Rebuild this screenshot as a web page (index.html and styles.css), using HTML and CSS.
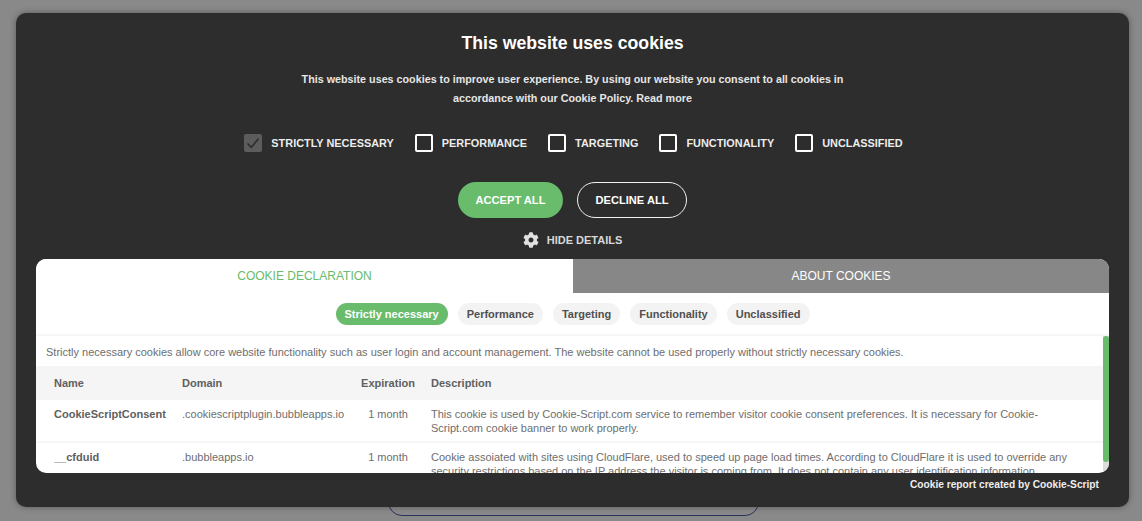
FILE: index.html
```html
<!DOCTYPE html>
<html lang="en">
<head>
<meta charset="utf-8">
<title>Cookies</title>
<link rel="stylesheet" href="styles.css">
</head>
<body>
<div class="behind"></div>
<section class="modal">
  <h1 class="title">This website uses cookies</h1>
  <p class="intro">This website uses cookies to improve user experience. By using our website you consent to all cookies in<br>accordance with our Cookie Policy. <span>Read more</span></p>
  <div class="checks">
    <label class="check"><span class="box box-on"><svg viewBox="0 0 18 18" width="18" height="18"><path d="M3.500 9.500l3.800 3.800 7.200-8.600" fill="none" stroke="#2d2d2d" stroke-width="1.600"/></svg></span>STRICTLY NECESSARY</label>
    <label class="check"><span class="box"></span>PERFORMANCE</label>
    <label class="check"><span class="box"></span>TARGETING</label>
    <label class="check"><span class="box"></span>FUNCTIONALITY</label>
    <label class="check"><span class="box"></span>UNCLASSIFIED</label>
  </div>
  <div class="actions">
    <button class="btn btn-accept">ACCEPT ALL</button>
    <button class="btn btn-decline">DECLINE ALL</button>
  </div>
  <div class="details">
    <svg class="gear" viewBox="0 0 512 512" width="16" height="16"><path fill="#e0e0e0" d="M487.400 315.700l-42.600-24.600c4.300-23.200 4.300-47 0-70.200l42.600-24.600c4.900-2.800 7.100-8.600 5.500-14-11.100-35.600-30-67.800-54.700-94.600-3.800-4.100-10-5.100-14.800-2.300L380.800 110c-17.900-15.400-38.500-27.300-60.800-35.100V25.800c0-5.600-3.900-10.500-9.400-11.700-36.700-8.200-74.300-7.800-109.200 0-5.500 1.200-9.400 6.100-9.400 11.700V75c-22.200 7.900-42.800 19.800-60.800 35.100L88.700 85.500c-4.900-2.800-11-1.900-14.800 2.300-24.700 26.700-43.600 58.900-54.700 94.600-1.700 5.400.6 11.200 5.500 14L67.300 221c-4.300 23.200-4.300 47 0 70.200l-42.600 24.600c-4.900 2.800-7.100 8.600-5.500 14 11.100 35.600 30 67.800 54.700 94.600 3.800 4.100 10 5.100 14.800 2.300l42.600-24.600c17.900 15.400 38.500 27.300 60.800 35.100v49.200c0 5.600 3.900 10.500 9.400 11.700 36.700 8.200 74.300 7.800 109.200 0 5.500-1.200 9.400-6.100 9.400-11.700v-49.200c22.200-7.900 42.800-19.800 60.800-35.100l42.600 24.600c4.900 2.800 11 1.900 14.800-2.300 24.700-26.700 43.600-58.900 54.700-94.600 1.500-5.500-.7-11.300-5.600-14.100zM256 336c-44.100 0-80-35.900-80-80s35.900-80 80-80 80 35.900 80 80-35.900 80-80 80z"/></svg>
    <span>HIDE DETAILS</span>
  </div>
  <div class="panel">
    <div class="tabs">
      <div class="tab tab-active">COOKIE DECLARATION</div>
      <div class="tab">ABOUT COOKIES</div>
    </div>
    <div class="pills">
      <span class="pill pill-on">Strictly necessary</span>
      <span class="pill">Performance</span>
      <span class="pill">Targeting</span>
      <span class="pill">Functionality</span>
      <span class="pill">Unclassified</span>
    </div>
    <div class="scroller">
      <div class="content">
        <p class="lead">Strictly necessary cookies allow core website functionality such as user login and account management. The website cannot be used properly without strictly necessary cookies.</p>
        <table class="table">
          <thead>
            <tr><th class="c-name">Name</th><th class="c-domain">Domain</th><th class="c-exp">Expiration</th><th>Description</th></tr>
          </thead>
          <tbody>
            <tr><td class="c-name strong">CookieScriptConsent</td><td class="c-domain">.cookiescriptplugin.bubbleapps.io</td><td class="c-exp">1 month</td><td>This cookie is used by Cookie-Script.com service to remember visitor cookie consent preferences. It is necessary for Cookie-Script.com cookie banner to work properly.</td></tr>
            <tr><td class="c-name strong">__cfduid</td><td class="c-domain">.bubbleapps.io</td><td class="c-exp">1 month</td><td>Cookie assoiated with sites using CloudFlare, used to speed up page load times. According to CloudFlare it is used to override any security restrictions based on the IP address the visitor is coming from. It does not contain any user identification information.</td></tr>
          </tbody>
        </table>
      </div>
      <div class="scrollbar"><div class="thumb"></div></div>
    </div>
  </div>
  <div class="credit">Cookie report created by Cookie-Script</div>
</section>
</body>
</html>
```

FILE: styles.css
```css
html, body { margin: 0; height: 100%; }
body {
  background: #898989;
  font-family: "Liberation Sans", Arial, sans-serif;
  overflow: hidden;
  position: relative;
  height: 521px;
}
.behind {
  position: absolute;
  left: 388px;
  top: 470px;
  width: 369px;
  height: 44px;
  border: 1px solid #2b3058;
  border-radius: 14px;
}
.modal {
  position: absolute;
  left: 16px;
  top: 13px;
  width: 1113px;
  height: 494px;
  box-sizing: border-box;
  background: #2d2d2d;
  border-radius: 10px;
  box-shadow: 0 0 6px rgba(0,0,0,.35);
  padding: 20px 20px 0;
  color: #fff;
  display: flex;
  flex-direction: column;
  align-items: center;
}
.title {
  margin: 0;
  font-size: 17.700px;
  line-height: 20px;
  font-weight: 700;
}
.intro {
  margin: 17px 0 0;
  font-size: 10.750px;
  line-height: 19px;
  font-weight: 700;
  color: #e6e6e6;
  text-align: center;
}
.intro span { color: #e6e6e6; }
.checks {
  display: flex;
  gap: 21px;
  margin: 25px 0 0 2px;
  height: 20px;
  align-items: center;
}
.check {
  display: flex;
  align-items: center;
  gap: 9px;
  font-size: 10.900px;
  font-weight: 700;
  color: #ececec;
}
.box {
  width: 18px;
  height: 18px;
  box-sizing: border-box;
  border: 2px solid #fff;
  border-radius: 2px;
  display: block;
}
.box-on {
  border: 0;
  background: #5c5c5c;
}
.box svg { display: block; }
.actions {
  display: flex;
  gap: 14px;
  margin-top: 29px;
}
.btn {
  height: 36px;
  border-radius: 18px;
  font: 700 11.100px "Liberation Sans", Arial, sans-serif;
  color: #fff;
  padding: 0;
}
.btn-accept {
  width: 105px;
  background: #68bc6c;
  border: 0;
}
.btn-decline {
  width: 110px;
  background: transparent;
  border: 1px solid #f0f0f0;
}
.details {
  display: flex;
  align-items: center;
  gap: 8px;
  margin-top: 14px;
  height: 16px;
  font-size: 11px;
  font-weight: 700;
  color: #d8d8d8;
}
.gear { display: block; }
.panel {
  align-self: stretch;
  margin-top: 11px;
  height: 214px;
  background: #fff;
  border-radius: 10px;
  overflow: hidden;
  display: flex;
  flex-direction: column;
}
.tabs {
  display: flex;
  flex: none;
  height: 34px;
}
.tab {
  flex: 1 1 0;
  background: #878787;
  color: #fff;
  font-size: 12px;
  line-height: 35px;
  text-align: center;
}
.tab-active {
  width: 537px;
  flex: none;
  background: #fff;
  color: #68bc6c;
}
.pills {
  flex: none;
  height: 43px;
  display: flex;
  justify-content: center;
  align-items: center;
  gap: 10px;
  border-bottom: 2px solid #f6f6f6;
  box-sizing: border-box;
}
.pill {
  height: 22px;
  line-height: 22px;
  padding: 0 9px;
  border-radius: 11px;
  background: #f3f3f3;
  color: #505050;
  font-size: 11px;
  font-weight: 700;
}
.pill-on {
  background: #68bc6c;
  color: #fff;
}
.scroller {
  flex: 1;
  min-height: 0;
  display: flex;
  overflow: hidden;
}
.content { flex: 1; min-width: 0; }
.scrollbar {
  flex: none;
  width: 6px;
  background: #dcdcdc;
}
.thumb {
  height: 126px;
  background: #68bc6c;
  border-radius: 3px;
}
.lead {
  margin: 0;
  padding: 0 10px;
  height: 30px;
  font-size: 11px;
  line-height: 33px;
  color: #6e6e6e;
}
.table {
  border-collapse: collapse;
  table-layout: fixed;
  width: 1067px;
  font-size: 11px;
  color: #6e6e6e;
}
.table th {
  background: #f5f5f5;
  height: 34px;
  padding: 0 30px 0 10px;
  text-align: left;
  font-weight: 700;
  color: #606060;
}
.table td {
  padding: 7px 30px 6px 10px;
  line-height: 14px;
  vertical-align: top;
  border-bottom: 2px solid #f6f6f6;
}
.table .c-name { width: 108px; padding-left: 18px; padding-right: 10px; }
.table .c-domain { width: 163px; padding-right: 10px; }
.table .c-exp { width: 56px; text-align: center; padding-left: 5px; padding-right: 5px; }
.table td.strong { font-weight: 700; color: #606060; }
.credit {
  align-self: flex-end;
  margin-top: 5px;
  margin-right: 10px;
  font-size: 10.200px;
  line-height: 14px;
  font-weight: 700;
  color: #eee;
}
```
